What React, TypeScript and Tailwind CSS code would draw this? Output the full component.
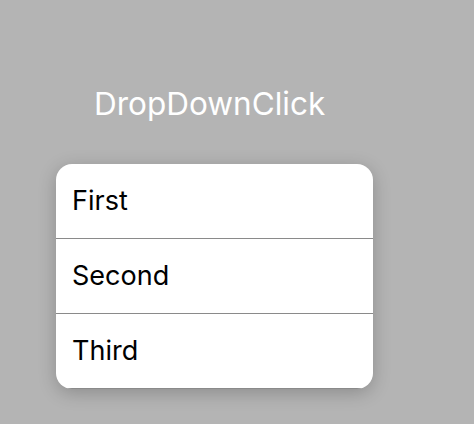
export default function App() {
  const items = ["First", "Second", "Third"];
  return (
    <div
      className="w-[474px] h-[424px] bg-[#b4b4b4] flex flex-col overflow-hidden"
      style={{ fontFamily: "Inter, 'Noto Sans', sans-serif" }}
    >
      <div className="mt-[84px] ml-[94px] text-[31.5px] leading-[40px] text-white">
        DropDownClick
      </div>
      <div className="mt-[40px] ml-[56px] w-[317px] bg-white rounded-[16px] overflow-hidden shadow-[0_4px_18px_rgba(0,0,0,0.22)]">
        {items.map((t) => (
          <div
            key={t}
            className="h-[75px] border-b border-[#8a8a8a] flex items-center pl-[16px] pt-[1px] text-[27px] text-black"
          >
            {t}
          </div>
        ))}
      </div>
    </div>
  );
}
